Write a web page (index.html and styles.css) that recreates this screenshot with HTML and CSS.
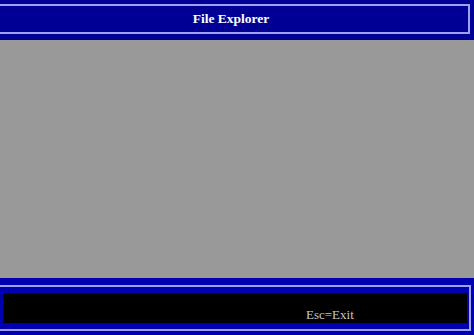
FILE: index.html
```html
<!DOCTYPE html>
<html>
<head>
<meta charset="utf-8">
<link rel="stylesheet" href="styles.css">
</head>
<body>
<div class="screen">
  <header class="top">
    <div class="frame title-frame">
      <span class="title">File Explorer</span>
    </div>
  </header>
  <main class="content"></main>
  <footer class="bottom">
    <div class="frame foot-frame">
      <div class="keys">
        <span class="key">Esc=Exit</span>
      </div>
    </div>
  </footer>
</div>
</body>
</html>
```
FILE: styles.css
```css
html, body {
  margin: 0;
  padding: 0;
  width: 474px;
  height: 335px;
  overflow: hidden;
  background: #999999;
}
.screen {
  display: flex;
  flex-direction: column;
  width: 474px;
  height: 335px;
}
.top {
  background: #000094;
  padding: 4px 4px 6px 0;
  height: 40px;
  box-sizing: border-box;
}
.frame {
  border: 2px solid #a0a0f0;
  border-left: none;
  box-sizing: border-box;
}
.title-frame {
  height: 30px;
  display: flex;
  align-items: center;
  justify-content: center;
  padding-right: 6px;
}
.title {
  font-family: "Liberation Serif", "Times New Roman", serif;
  font-weight: bold;
  font-size: 13.5px;
  color: #ffffff;
  line-height: 16px;
}
.content {
  flex: 1;
  background: #999999;
}
.bottom {
  background: #0000b0;
  height: 57px;
  box-sizing: border-box;
  padding: 7px 3px 4px 0;
}
.foot-frame {
  height: 46px;
  padding: 6px 2px 5px 3px;
}
.keys {
  background: #000000;
  height: 30px;
  box-sizing: border-box;
  padding: 14px 0 0 303px;
}
.key {
  font-family: "Liberation Serif", "Times New Roman", serif;
  font-size: 13px;
  line-height: 16px;
  color: #c8c8c8;
  display: block;
}
```
